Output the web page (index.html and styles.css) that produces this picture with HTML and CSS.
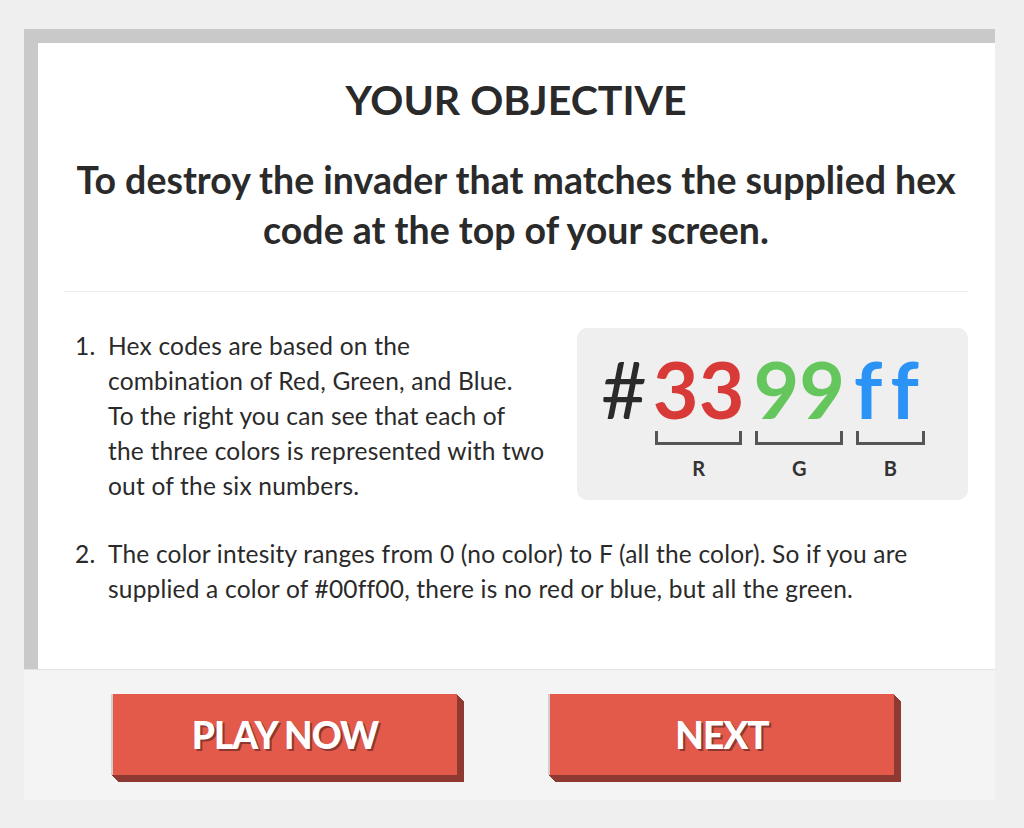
FILE: index.html
```html
<!DOCTYPE html>
<html lang="en">
<head>
<meta charset="utf-8">
<title>Your Objective</title>
<link rel="stylesheet" href="styles.css">
</head>
<body>
<div class="page">
  <section class="card">
    <div class="card-body">
      <h1 class="title">YOUR OBJECTIVE</h1>
      <p class="lead">To destroy the invader that matches the supplied hex<br>code at the top of your screen.</p>
      <hr class="divider">
      <div class="step step-first">
        <span class="num">1.</span>
        <p class="step-text step-text-narrow">Hex codes are based on the<br>combination of Red, Green, and Blue.<br>To the right you can see that each of<br>the three colors is represented with two<br>out of the six numbers.</p>
        <div class="hex-box">
          <span class="hash">#</span>
          <div class="group">
            <span class="pair red">33</span>
            <span class="bracket"></span>
            <span class="label">R</span>
          </div>
          <div class="group">
            <span class="pair green">99</span>
            <span class="bracket"></span>
            <span class="label">G</span>
          </div>
          <div class="group">
            <span class="pair blue">ff</span>
            <span class="bracket"></span>
            <span class="label">B</span>
          </div>
        </div>
      </div>
      <div class="step">
        <span class="num">2.</span>
        <p class="step-text">The color intesity ranges from 0 (no color) to F (all the color). So if you are<br>supplied a color of #00ff00, there is no red or blue, but all the green.</p>
      </div>
    </div>
    <div class="card-foot">
      <button class="btn" type="button">PLAY NOW</button>
      <button class="btn" type="button">NEXT</button>
    </div>
  </section>
</div>
</body>
</html>
```

FILE: styles.css
```css
* {
  box-sizing: border-box;
}

html,
body {
  margin: 0;
  background: #efefef;
}

body {
  font-family: Lato, "Open Sans", sans-serif;
  color: #2a2a2a;
}

.page {
  padding: 29px 29px 28px 24px;
}

.card {
  width: 971px;
  border-top: 14px solid #c9c9c9;
}

.card-body {
  height: 626px;
  background: #fff;
  border-left: 14px solid #c9c9c9;
  padding: 34px 27px 0 26px;
}

.title {
  margin: 0;
  text-align: center;
  font-size: 41px;
  line-height: 46px;
  font-weight: 700;
}

.lead {
  margin: 32px 0 0;
  text-align: center;
  font-size: 37.5px;
  line-height: 50px;
  font-weight: 700;
}

.divider {
  margin: 36px 0 0;
  border: 0;
  border-top: 1px solid #ebebeb;
  height: 0;
}

.step {
  display: flex;
  align-items: flex-start;
  padding-left: 11px;
  font-size: 24.5px;
  line-height: 35px;
  letter-spacing: 0.2px;
  white-space: nowrap;
}

.step-first {
  margin-top: 36px;
}

.step + .step {
  margin-top: 33px;
}

.num {
  flex: none;
  width: 33px;
}

.step-text {
  margin: 0;
}

.step-text-narrow {
  width: 440px;
}

.hex-box {
  margin-left: auto;
  width: 391px;
  height: 172px;
  background: #efefef;
  border-radius: 10px;
  display: flex;
  align-items: flex-start;
  padding: 21px 0 0 24px;
  letter-spacing: 0;
}

.hash,
.pair {
  font-size: 79px;
  line-height: 79px;
  font-variant-ligatures: none;
}

.hash {
  color: #2a2a2a;
  font-weight: 400;
  margin-right: 6px;
}

.pair {
  display: block;
  text-align: left;
  font-weight: 700;
}

.group {
  display: flex;
  flex-direction: column;
  align-items: stretch;
  margin-right: 9px;
}

.red {
  color: #d83a37;
}

.green {
  color: #64c65c;
}

.blue {
  color: #2c93f6;
  letter-spacing: 8px;
}

.bracket {
  display: block;
  height: 14px;
  margin: 3px 2px 0;
  border: 3px solid #555;
  border-top: 0;
}

.label {
  display: block;
  margin-top: 13px;
  text-align: center;
  font-size: 20px;
  line-height: 20px;
  font-weight: 700;
  color: #333;
}

.card-foot {
  height: 131px;
  background: #f4f4f4;
  border-top: 1px solid #e2e2e2;
  display: flex;
  align-items: flex-start;
  gap: 91px;
  padding: 24px 0 0 87px;
}

.btn {
  width: 346px;
  height: 81px;
  border: 0;
  border-left: 2px solid #d6cccb;
  background: #e3594a;
  color: #fff;
  font-family: Lato, sans-serif;
  font-size: 37px;
  font-weight: 900;
  letter-spacing: -1px;
  text-shadow: 2px 2px 0 #8e3630;
  box-shadow:
    1px 1px 0 #8e3a33,
    2px 2px 0 #8e3a33,
    3px 3px 0 #8e3a33,
    4px 4px 0 #8e3a33,
    5px 5px 0 #8e3a33,
    6px 6px 0 #8e3a33,
    7px 7px 0 #8e3a33;
  padding: 0;
  cursor: pointer;
}
```
